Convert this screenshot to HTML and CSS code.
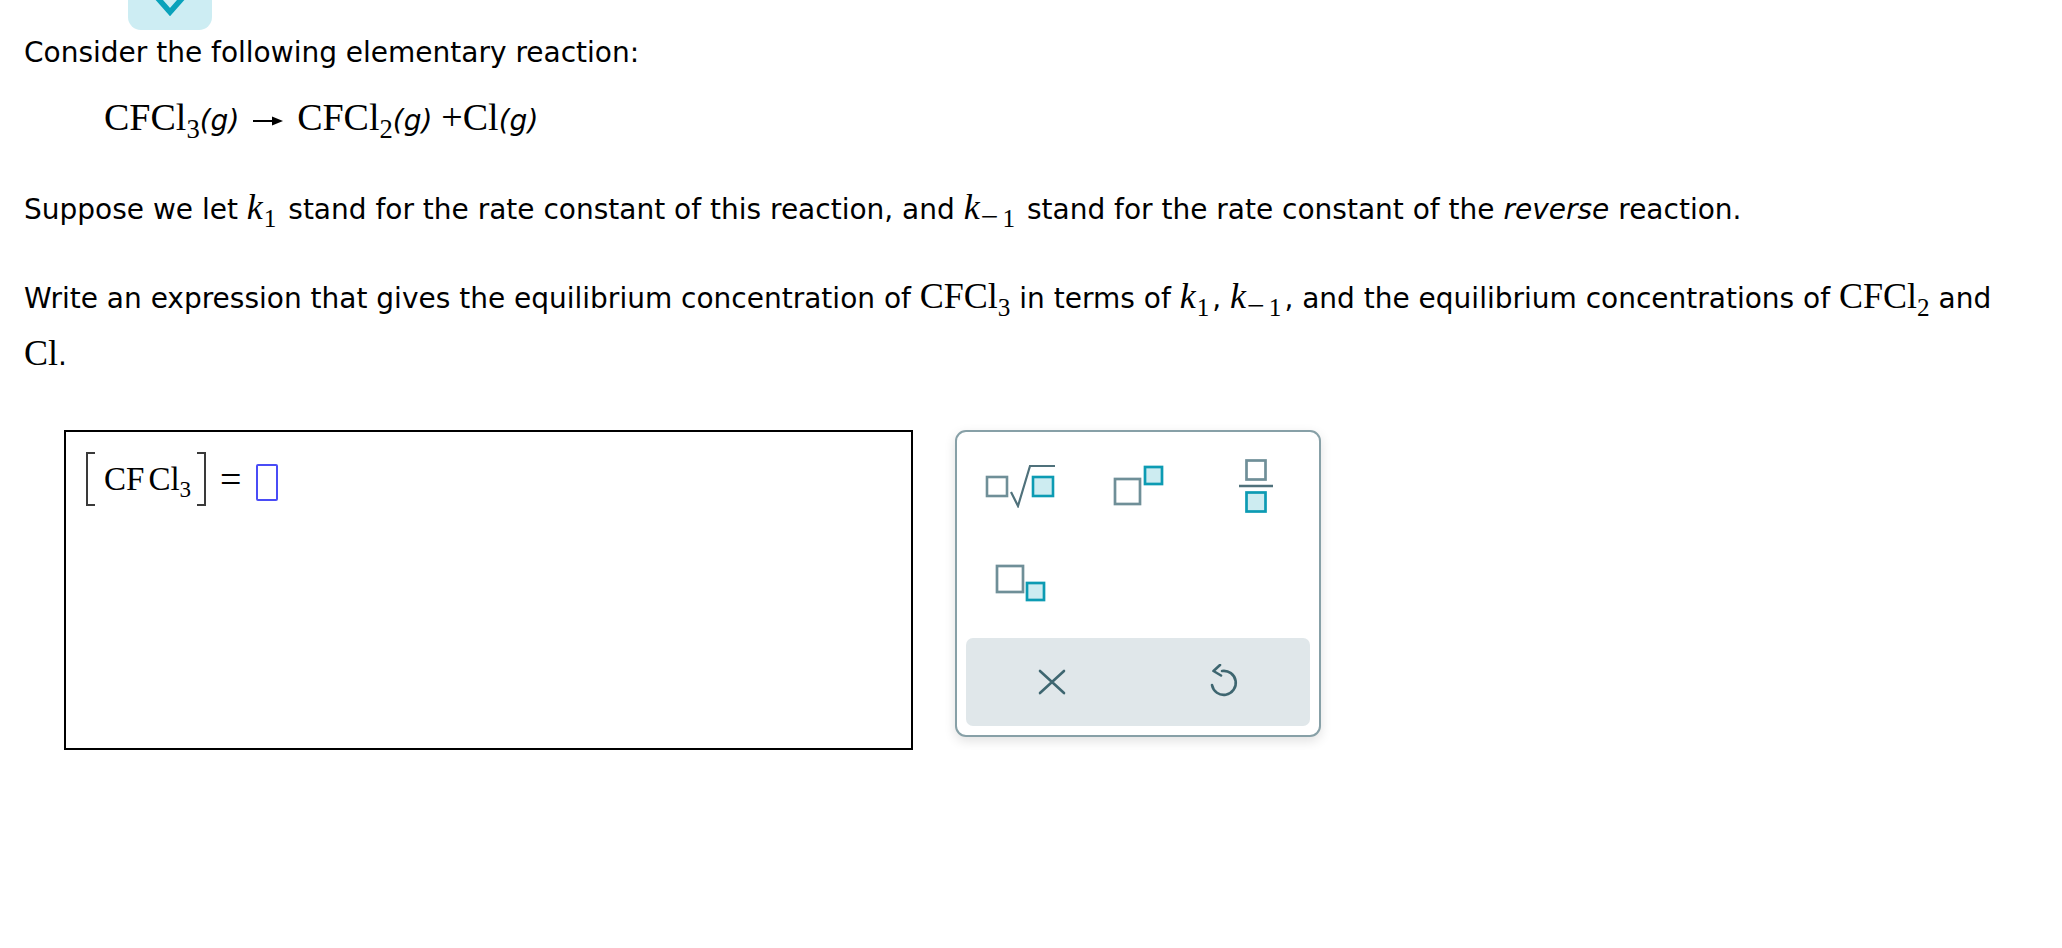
FILE: index.html
```html
<!DOCTYPE html>
<html>
<head>
<meta charset="utf-8">
<link rel="stylesheet" href="styles.css">
</head>
<body>
<div class="toggle">
  <svg width="84" height="30" viewBox="0 0 84 30"><polyline points="26,-6 42,12 58,-6" fill="none" stroke="#0aa2bb" stroke-width="5.5" stroke-linejoin="miter"/></svg>
</div>
<div class="question">
  <p class="intro">Consider the following elementary reaction:</p>
  <p class="eq"><span class="chem">CFCl<sub>3</sub></span><i class="st">(g)</i> <svg class="arrow" width="30" height="12" viewBox="0 0 30 12"><line x1="0" y1="6" x2="21" y2="6" stroke="#000" stroke-width="2"/><polygon points="19,1.5 30,6 19,10.5" fill="#000"/></svg> <span class="chem">CFCl<sub>2</sub></span><i class="st">(g)</i> <span class="chem">+Cl</span><i class="st">(g)</i></p>
  <p class="para">Suppose we let <span class="m"><i>k</i><sub>1</sub></span> stand for the rate constant of this reaction, and <span class="m"><i>k</i><sub><span class="minus">−</span>1</sub></span> stand for the rate constant of the <i>reverse</i> reaction.</p>
  <p class="para">Write an expression that gives the equilibrium concentration of <span class="chem">CFCl<sub>3</sub></span> in terms of <span class="m"><i>k</i><sub>1</sub></span>, <span class="m"><i>k</i><sub><span class="minus">−</span>1</sub></span>, and the equilibrium concentrations of <span class="chem">CFCl<sub>2</sub></span> and <span class="chem">Cl</span>.</p>
</div>
<div class="answer-row">
  <div class="answer-box">
    <div class="expr">
      <span class="br br-l"></span>
      <span class="box-chem">CF<span class="gap"></span>Cl<sub>3</sub></span>
      <span class="br br-r"></span>
      <span class="eqsign">=</span>
      <span class="slot"></span>
    </div>
  </div>
  <div class="palette">
    <div class="tools">
      <div class="tool">
        <svg width="74" height="44" viewBox="0 0 74 44">
          <rect x="3" y="13" width="20" height="19" fill="none" stroke="#6f8f98" stroke-width="2.6"/>
          <polyline points="27,28 34,42 46,2 71,2" fill="none" stroke="#4f717b" stroke-width="2.2"/>
          <rect x="49" y="13" width="20" height="19" fill="#cdecf1" stroke="#0c9bb3" stroke-width="2.6"/>
        </svg>
      </div>
      <div class="tool">
        <svg width="54" height="44" viewBox="0 0 54 44">
          <rect x="3" y="15" width="25" height="25" fill="none" stroke="#6f8f98" stroke-width="2.7"/>
          <rect x="33" y="3" width="17" height="17" fill="#cdecf1" stroke="#0c9bb3" stroke-width="2.7"/>
        </svg>
      </div>
      <div class="tool">
        <svg width="38" height="60" viewBox="0 0 38 60">
          <rect x="9.5" y="4.5" width="19" height="19" fill="none" stroke="#6f8f98" stroke-width="2.7"/>
          <line x1="2" y1="30" x2="36" y2="30" stroke="#4f717b" stroke-width="2.4"/>
          <rect x="9.5" y="36.5" width="19" height="19" fill="#cdecf1" stroke="#0c9bb3" stroke-width="2.7"/>
        </svg>
      </div>
      <div class="tool">
        <svg width="54" height="40" viewBox="0 0 54 40">
          <rect x="3" y="3" width="26" height="26" fill="none" stroke="#6f8f98" stroke-width="2.7"/>
          <rect x="33" y="20" width="17" height="17" fill="#cdecf1" stroke="#0c9bb3" stroke-width="2.7"/>
        </svg>
      </div>
    </div>
    <div class="actions">
      <div class="action">
        <svg width="28" height="28" viewBox="0 0 28 28"><path d="M2 3 L26 25 M26 3 L2 25" stroke="#3e6670" stroke-width="2.6" stroke-linecap="round" fill="none"/></svg>
      </div>
      <div class="action">
        <svg width="32" height="36" viewBox="0 0 32 36"><path d="M14 7 A12 12 0 1 1 4 21" fill="none" stroke="#3e6670" stroke-width="2.6" stroke-linecap="round"/><path d="M12 1 L5.5 7 L13 11.5" fill="none" stroke="#3e6670" stroke-width="2.6" stroke-linecap="round" stroke-linejoin="round"/></svg>
      </div>
    </div>
  </div>
</div>
</body>
</html>
```
FILE: styles.css
```css
body {
  margin: 0;
  background: #fff;
  color: #000;
  font-family: "DejaVu Sans", Verdana, sans-serif;
  font-size: 28px;
}

.toggle {
  margin-left: 128px;
  width: 84px;
  height: 30px;
  background: #cdedf3;
  border-radius: 0 0 13px 13px;
  overflow: hidden;
}
.toggle svg { display: block; }

.question {
  padding: 0 40px 0 24px;
}

p { margin: 0; }

.intro {
  line-height: 34px;
  margin-top: 6px;
}

.eq {
  line-height: 57px;
  margin-top: 22px;
  padding-left: 80px;
}

.para {
  line-height: 57px;
  margin-top: 32px;
}

.chem, .m {
  font-family: "Liberation Serif", "Times New Roman", serif;
  font-size: 36px;
  font-style: normal;
  line-height: 1;
}
.eq .chem { font-size: 38px; }
.m { margin-right: 3px; }
.m i { font-style: italic; }

sub {
  font-size: 0.7em;
  vertical-align: -0.3em;
  line-height: 0;
}
.m sub { padding-left: 1px; }
.minus {
  font-size: 1.25em;
  margin-right: 4px;
}

.st {
  font-style: italic;
}

.arrow {
  vertical-align: 3px;
  margin: 0 5px;
}

.answer-row {
  display: flex;
  align-items: flex-start;
  gap: 42px;
  margin-top: 46px;
  padding-left: 64px;
}

.answer-box {
  box-sizing: border-box;
  width: 849px;
  height: 320px;
  border: 2px solid #000;
  padding: 20px 0 0 20px;
}

.expr {
  display: flex;
  align-items: center;
  height: 54px;
  font-family: "Liberation Serif", "Times New Roman", serif;
  font-size: 33px;
}

.br {
  box-sizing: border-box;
  width: 9px;
  height: 54px;
  border: 2.5px solid #3a3a3a;
}
.br-l { border-right: none; margin-right: 9px; }
.br-r { border-left: none; margin-left: 6px; }

.box-chem { line-height: 1; }
.gap { display: inline-block; width: 4px; }

.eqsign {
  font-size: 38px;
  margin: 0 14px 0 14px;
}

.slot {
  box-sizing: border-box;
  width: 22px;
  height: 37px;
  border: 2px solid #4a4cf6;
  border-radius: 2px;
  margin-top: 6px;
}

.palette {
  box-sizing: border-box;
  width: 366px;
  height: 307px;
  border: 2px solid #87a0a7;
  border-radius: 11px;
  padding: 5px 9px 9px;
  background: #fff;
  box-shadow: 0 4px 12px rgba(0, 0, 0, 0.12);
}

.tools {
  display: grid;
  grid-template-columns: 110px 126px 108px;
  grid-template-rows: 98px 96px;
}

.tool {
  display: flex;
  align-items: center;
  justify-content: center;
}
.tool svg { display: block; }

.actions {
  margin-top: 7px;
  height: 88px;
  background: #e0e7ea;
  border-radius: 7px;
  display: grid;
  grid-template-columns: 1fr 1fr;
}

.action {
  display: flex;
  align-items: center;
  justify-content: center;
}
.action svg { display: block; }
```
